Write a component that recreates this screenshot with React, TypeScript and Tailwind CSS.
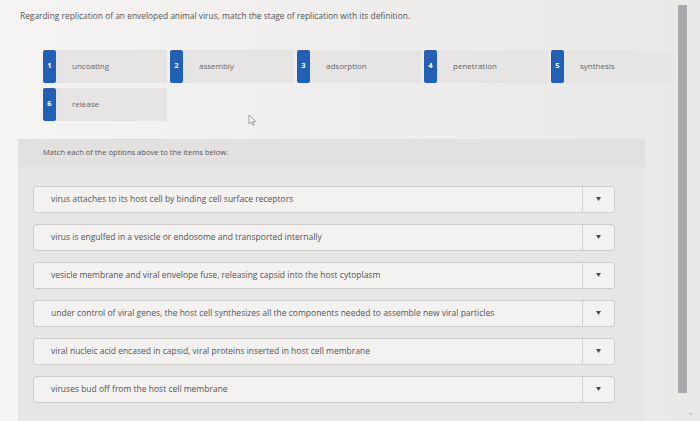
import { ChevronDown } from 'lucide-react';

const stages = [
  { n: '1', label: 'uncoating' },
  { n: '2', label: 'assembly' },
  { n: '3', label: 'adsorption' },
  { n: '4', label: 'penetration' },
  { n: '5', label: 'synthesis' },
];

const items = [
  'virus attaches to its host cell by binding cell surface receptors',
  'virus is engulfed in a vesicle or endosome and transported internally',
  'vesicle membrane and viral envelope fuse, releasing capsid into the host cytoplasm',
  'under control of viral genes, the host cell synthesizes all the components needed to assemble new viral particles',
  'viral nucleic acid encased in capsid, viral proteins inserted in host cell membrane',
  'viruses bud off from the host cell membrane',
];

function Chip({ n, label }: { n: string; label: string }) {
  return (
    <div className="flex h-[33px] w-[124px] shrink-0">
      <div className="flex w-[13px] items-center justify-center rounded-[2px] bg-[#2160b4] text-[7.5px] font-bold text-white">
        {n}
      </div>
      <div className="flex flex-1 items-center bg-[#e7e5e4] pl-4 text-[8px] text-[#666]">{label}</div>
    </div>
  );
}

function MatchRow({ text }: { text: string }) {
  return (
    <div className="flex h-[27px] w-[582px] rounded-[3px] border border-[#cfcdcc] bg-[#f3f2f1]">
      <div className="flex flex-1 items-center pl-[17px] text-[8.5px] text-[#555]">{text}</div>
      <div className="flex w-[32px] items-center justify-center border-l border-[#d2d0cf]">
        <svg width="5" height="4" viewBox="0 0 5 4">
          <path d="M0 0h5L2.5 4z" fill="#4a4a55" />
        </svg>
      </div>
    </div>
  );
}

export default function App() {
  return (
    <div
      className="relative flex h-[421px] w-[700px] overflow-hidden bg-gradient-to-r from-[#f5f4f3] via-[#efeeed] to-[#eae9e8]"
      style={{ fontFamily: '"Open Sans", Lato, sans-serif' }}
    >
      <div className="flex flex-1 flex-col">
        <p className="pl-5 pt-[10px] text-[8.4px] text-[#555]">
          Regarding replication of an enveloped animal virus, match the stage of replication with its definition.
        </p>

        <div className="mt-[27px] flex flex-col gap-[5px] pl-[43px]">
          <div className="flex gap-[3px]">
            {stages.map((s) => (
              <Chip key={s.n} {...s} />
            ))}
          </div>
          <div className="flex">
            <Chip n="6" label="release" />
          </div>
        </div>

        <div className="ml-[18px] mt-[18px] flex w-[627px] flex-1 flex-col bg-[#e9e7e6]">
          <div className="flex h-[28px] items-center bg-[#e3e1e0] pl-[25px] text-[7.6px] text-[#555]">
            Match each of the options above to the items below.
          </div>
          <div className="flex flex-col gap-[11px] pl-[15px] pt-[19px]">
            {items.map((t) => (
              <MatchRow key={t} text={t} />
            ))}
          </div>
        </div>
      </div>

      <div className="flex w-[23px] flex-col items-start pl-[1px] pt-[5px]">
        <div className="h-[388px] w-[9px] bg-[#a9a8ab]" />
        <ChevronDown size={6} className="mt-auto mb-[4px] ml-[10px] text-[#777]" />
      </div>

      <svg className="absolute left-[248px] top-[114px]" width="8" height="12" viewBox="0 0 8 12">
        <path d="M1 1v9l2.2-2.2 1.6 3.4 1.3-.6-1.6-3.3H7.6z" fill="#fff" stroke="#888" strokeWidth="0.8" />
      </svg>
    </div>
  );
}
